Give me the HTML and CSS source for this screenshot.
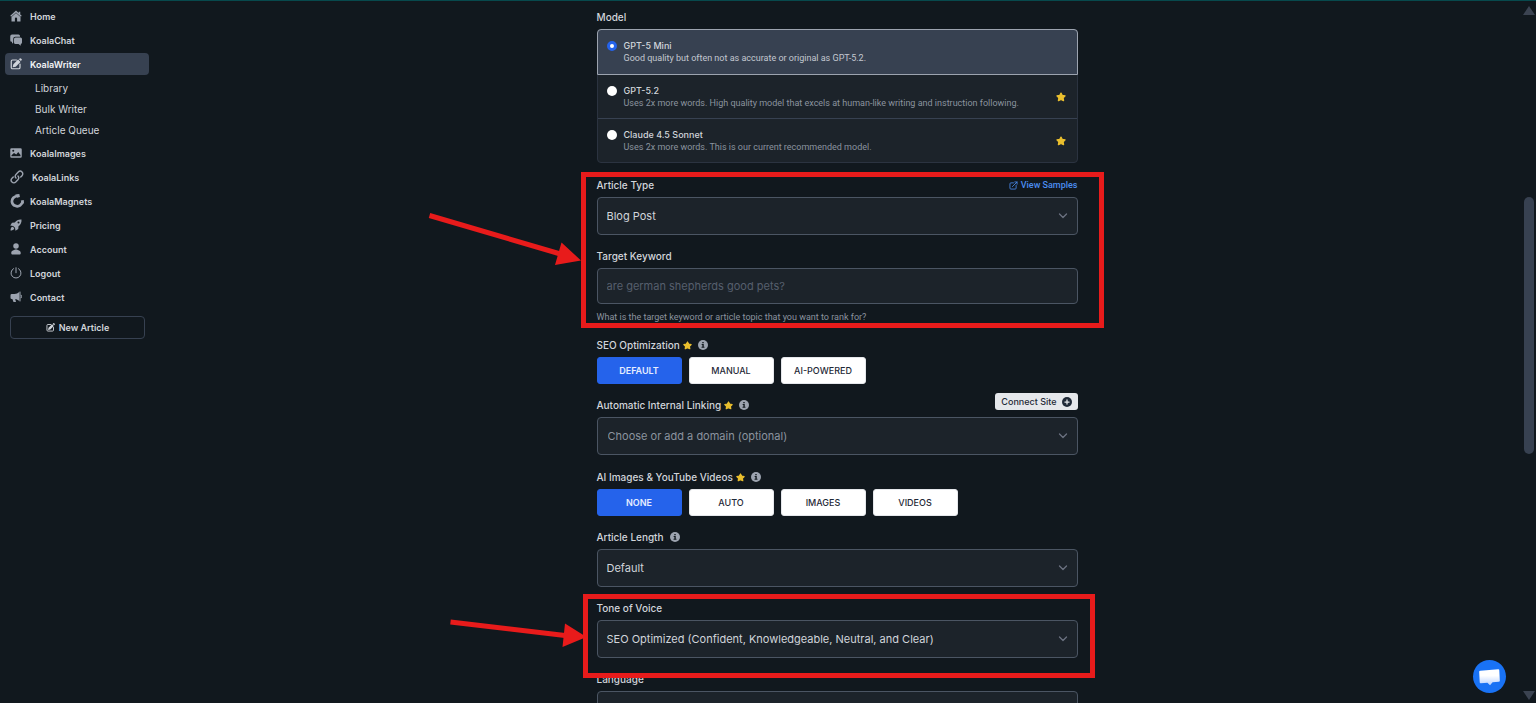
FILE: index.html
```html
<!DOCTYPE html>
<html lang="en">
<head>
<meta charset="utf-8">
<title>KoalaWriter</title>
<link rel="stylesheet" href="styles.css">
</head>
<body>
<svg class="sprite" aria-hidden="true">
  <symbol id="star" viewBox="0 0 24 24"><path fill="currentColor" stroke="currentColor" stroke-width="3" stroke-linejoin="round" d="M12 2.500l3.200 5.800 6.600 1.100-4.600 4.800 1 6.600L12 18l-6.200 2.800 1-6.600L2.200 9.400l6.600-1.100z"/></symbol>
  <symbol id="info" viewBox="0 0 24 24"><circle cx="12" cy="12" r="12" fill="currentColor"/><path fill="#11181e" d="M10.300 4.500h3.400v3.300h-3.400zM8.800 9.800h5v6.500h1.700v2.200H8.500v-2.200h2v-4.300H8.800z"/></symbol>
  <symbol id="chevron" viewBox="0 0 10 6"><path fill="none" stroke="currentColor" stroke-width="1.300" stroke-linecap="round" stroke-linejoin="round" d="M1.500 1L5 4.500 8.500 1"/></symbol>
  <symbol id="edit" viewBox="0 0 24 24"><path fill="none" stroke="currentColor" stroke-width="2.400" stroke-linecap="round" stroke-linejoin="round" d="M13 4H5a2.500 2.500 0 0 0-2.500 2.500V19A2.500 2.500 0 0 0 5 21.500h12.500A2.500 2.500 0 0 0 20 19v-7"/><path fill="currentColor" d="M16.200 3.100l4.700 4.700-9.500 9.500-6 1.300 1.300-6zM17.900 2.400l1.500-1.500a1.700 1.700 0 0 1 2.400 0l1.300 1.300a1.700 1.700 0 0 1 0 2.400l-1.500 1.500z"/></symbol>
</svg>
<div class="app">
  <nav class="sidebar" aria-label="Main">
    <ul class="menu">
      <li><a class="item" href="#"><svg class="icon" viewBox="0 0 24 24"><path fill="currentColor" d="M12 1L.5 11.500l1.800 2L12 4.900l9.700 8.600 1.800-2-3-2.700V3.500h-3v2.600z"/><path fill="currentColor" d="M12 6.200l-9 8V23h6.800v-6a2.200 2.200 0 0 1 4.400 0v6H21v-8.800z"/></svg>Home</a></li>
      <li><a class="item" href="#"><svg class="icon" viewBox="0 0 24 24"><path fill="currentColor" d="M4 1h13a3 3 0 0 1 3 3v1.500h-9.500a4 4 0 0 0-4 4V17L4 19.500v-4a3 3 0 0 1-3.500-3V4.500A3.500 3.500 0 0 1 4 1z"/><path fill="currentColor" d="M11 7h10a3 3 0 0 1 3 3v7a3 3 0 0 1-2.500 3v3.500L17 20h-6a3 3 0 0 1-3-3v-7a3 3 0 0 1 3-3z"/></svg>KoalaChat</a></li>
      <li><a class="item active" href="#" aria-current="page"><svg class="icon"><use href="#edit"/></svg>KoalaWriter</a>
        <ul class="submenu">
          <li><a class="subitem" href="#">Library</a></li>
          <li><a class="subitem" href="#">Bulk Writer</a></li>
          <li><a class="subitem" href="#">Article Queue</a></li>
        </ul>
      </li>
      <li><a class="item" href="#"><svg class="icon" viewBox="0 0 24 24"><path fill="currentColor" fill-rule="evenodd" d="M3 2.500h18A2.500 2.500 0 0 1 23.500 5v14a2.500 2.500 0 0 1-2.500 2.500H3A2.500 2.500 0 0 1 .5 19V5A2.500 2.500 0 0 1 3 2.500zM3 18.500h18V16l-4.500-6-4 5L8 12l-5 4.500zM6.500 5.700a2 2 0 1 0 0 4 2 2 0 0 0 0-4z"/></svg>KoalaImages</a></li>
      <li><a class="item" href="#"><svg class="icon icon-wide" viewBox="0 0 24 24"><g fill="none" stroke="currentColor" stroke-width="2.400" stroke-linecap="round" stroke-linejoin="round"><path d="M13.700 10.300c1.800 2 1.500 4.700-.2 6.400l-3.700 4a4.500 4.500 0 0 1-6.400-6.400l2.200-2.400"/><path d="M10.300 13.700c-1.800-2-1.500-4.700.2-6.400l3.700-4a4.500 4.500 0 0 1 6.400 6.400l-2.200 2.400"/></g></svg>KoalaLinks</a></li>
      <li><a class="item" href="#"><svg class="icon icon-wide icon-flush" viewBox="0 0 24 24"><path fill="none" stroke="currentColor" stroke-width="4.600" d="M14.500 3C7 3.500 2.500 8 3.500 14s9 9 14 5.500l5-6"/><path fill="currentColor" d="M9 1l7-.8 1 5-5 1.300zM18.500 11l5-.8.5 4.500-4 2z"/></svg>KoalaMagnets</a></li>
      <li><a class="item" href="#"><svg class="icon" viewBox="0 0 24 24"><path fill="currentColor" fill-rule="evenodd" d="M23 1c.5 6-1.500 10-6 13.500L16.500 20 11 23.500l-1-5.800L6.300 14 .5 13 4 7.500 9.500 7C13 2.500 17 .5 23 1zM17 5a2 2 0 1 0 0 4 2 2 0 0 0 0-4z"/><path fill="currentColor" d="M4.500 15.500c2 .3 3.700 2 4 4C7.500 22 4 23 1 23c0-3 1-6.500 3.500-7.500z"/></svg>Pricing</a></li>
      <li><a class="item" href="#"><svg class="icon" viewBox="0 0 24 24"><circle cx="12" cy="6" r="5.500" fill="currentColor"/><path fill="currentColor" d="M12 12.500c2.500 1.500 9.500 2 9.500 7.500 0 2-1 3-3 3h-13c-2 0-3-1-3-3 0-5.500 7-6 9.500-7.500z"/></svg>Account</a></li>
      <li><a class="item" href="#"><svg class="icon" viewBox="0 0 24 24"><g fill="none" stroke="currentColor" stroke-width="2" stroke-linecap="round"><path d="M7 3.300a10 10 0 1 0 10 0M12 1.500v10"/></g></svg>Logout</a></li>
      <li><a class="item" href="#"><svg class="icon" viewBox="0 0 24 24"><path fill="currentColor" d="M18.500 2v18c-3-2.500-5-3.500-8-4l1.500 6H7l-2.300-6H3.500A2.500 2.500 0 0 1 1 13.500v-5A2.500 2.500 0 0 1 3.500 6H9c4 0 6.500-1.500 9.500-4z"/><path fill="none" stroke="currentColor" stroke-width="2" stroke-linecap="round" d="M20 2v18M22.500 8.500c.7 1.700.7 3.300 0 5"/></svg>Contact</a></li>
    </ul>
    <button class="new-article" type="button"><svg class="icon-small"><use href="#edit"/></svg>New Article</button>
  </nav>

  <main class="content">
    <form class="form">
      <fieldset class="field models">
        <legend class="label">Model</legend>
        <div class="model-list">
          <label class="model selected">
            <input type="radio" name="model" checked>
            <span class="model-text"><span class="model-name">GPT-5 Mini</span><span class="model-note">Good quality but often not as accurate or original as GPT-5.2.</span></span>
          </label>
          <label class="model">
            <input type="radio" name="model">
            <span class="model-text"><span class="model-name">GPT-5.2</span><span class="model-note">Uses 2x more words. High quality model that excels at human-like writing and instruction following.</span></span>
            <svg class="star"><use href="#star"/></svg>
          </label>
          <label class="model">
            <input type="radio" name="model">
            <span class="model-text"><span class="model-name">Claude 4.5 Sonnet</span><span class="model-note">Uses 2x more words. This is our current recommended model.</span></span>
            <svg class="star"><use href="#star"/></svg>
          </label>
        </div>
      </fieldset>

      <div class="field">
        <div class="label-row">
          <label class="label" for="type">Article Type</label>
          <a class="samples" href="#"><svg class="icon-small" viewBox="0 0 24 24"><path fill="none" stroke="currentColor" stroke-width="2.200" stroke-linecap="round" stroke-linejoin="round" d="M12 5H5a2.500 2.500 0 0 0-2.500 2.500V19A2.500 2.500 0 0 0 5 21.500h11.500A2.500 2.500 0 0 0 19 19v-7M15.500 2.500h6v6M21.500 2.500L9 15"/></svg>View Samples</a>
        </div>
        <div class="select"><select id="type"><option>Blog Post</option></select><svg class="chevron"><use href="#chevron"/></svg></div>
      </div>

      <div class="field">
        <label class="label" for="keyword">Target Keyword</label>
        <input class="text" id="keyword" type="text" placeholder="are german shepherds good pets?" aria-describedby="keyword-help">
        <p class="help" id="keyword-help">What is the target keyword or article topic that you want to rank for?</p>
      </div>

      <div class="field" role="group" aria-labelledby="seo">
        <div class="label" id="seo">SEO Optimization<svg class="star"><use href="#star"/></svg><svg class="info"><use href="#info"/></svg></div>
        <div class="choices"><button class="choice on" type="button">DEFAULT</button><button class="choice" type="button">MANUAL</button><button class="choice" type="button">AI-POWERED</button></div>
      </div>

      <div class="field">
        <div class="label-row">
          <label class="label" for="domain">Automatic Internal Linking<svg class="star"><use href="#star"/></svg><svg class="info"><use href="#info"/></svg></label>
          <button class="connect" type="button">Connect Site<svg class="plus" viewBox="0 0 24 24"><circle cx="12" cy="12" r="12" fill="currentColor"/><path stroke="#e5e7eb" stroke-width="3" stroke-linecap="round" d="M12 7v10M7 12h10"/></svg></button>
        </div>
        <div class="select"><select class="muted" id="domain"><option>Choose or add a domain (optional)</option></select><svg class="chevron"><use href="#chevron"/></svg></div>
      </div>

      <div class="field media" role="group" aria-labelledby="media">
        <div class="label" id="media">AI Images &amp; YouTube Videos<svg class="star"><use href="#star"/></svg><svg class="info"><use href="#info"/></svg></div>
        <div class="choices"><button class="choice on" type="button">NONE</button><button class="choice" type="button">AUTO</button><button class="choice" type="button">IMAGES</button><button class="choice" type="button">VIDEOS</button></div>
      </div>

      <div class="field">
        <label class="label" for="length">Article Length<svg class="info"><use href="#info"/></svg></label>
        <div class="select"><select id="length"><option>Default</option></select><svg class="chevron"><use href="#chevron"/></svg></div>
      </div>

      <div class="field">
        <label class="label" for="tone">Tone of Voice</label>
        <div class="select"><select id="tone"><option>SEO Optimized (Confident, Knowledgeable, Neutral, and Clear)</option></select><svg class="chevron"><use href="#chevron"/></svg></div>
      </div>

      <div class="field">
        <label class="label" for="language">Language</label>
        <div class="select"><select id="language"><option>English</option></select><svg class="chevron"><use href="#chevron"/></svg></div>
      </div>

      <svg class="callouts" viewBox="0 0 700 703" aria-hidden="true">
        <g fill="none" stroke="#e81b1b" stroke-width="5">
          <path d="M186.500 174.500h518v151h-518z"/>
          <path d="M188.500 596.500h507v79h-507z"/>
          <path d="M32.500 215.500L165 254.500M53.500 622L168 635.500"/>
        </g>
        <path fill="#e81b1b" d="M164.500 242.500L184 260.500l-26 4.500zM168 623.500l21.500 13.500-24 10z"/>
      </svg>
    </form>
  </main>

  <div class="scroll-track" aria-hidden="true">
    <span class="arrow-up"></span><span class="thumb"></span><span class="arrow-down"></span>
  </div>

  <button class="chat" type="button" aria-label="Open chat"><svg viewBox="0 0 32 32"><defs><linearGradient id="bubble" x1="0" y1="0" x2="0" y2="1"><stop offset="0" stop-color="#fff"/><stop offset=".4" stop-color="#fff"/><stop offset="1" stop-color="#b9d2ff"/></linearGradient></defs><path fill="url(#bubble)" d="M7 10.500l17.500-1.500q1 0 1 1l.5 10q0 1-1 1l-6 .5-2.500 3-2.500-2.500-6.500.5q-1 0-1-1l-.5-10q0-1 1-1z"/></svg></button>
</div>
</body>
</html>
```

FILE: styles.css
```css
* { box-sizing: border-box; }

body {
  margin: 0;
  background: #11181e;
  color: #d1d5db;
  font-family: Inter, "Liberation Sans", sans-serif;
  font-size: 10px;
}

button, input, select { font-family: inherit; margin: 0; }
ul { list-style: none; margin: 0; padding: 0; }
a { color: inherit; text-decoration: none; }
svg { flex: none; }

.sprite { position: absolute; width: 0; height: 0; }

.app {
  display: flex;
  height: 100vh;
  overflow: hidden;
  border-top: 1px solid #07494d;
}

/* Sidebar */
.sidebar { flex: none; width: 153px; padding: 3px 4px 0 5px; }

.menu > li { padding: 1px 0; }
.menu > li:has(.submenu) { padding-bottom: 0; }

.item {
  display: flex;
  align-items: center;
  gap: 8px;
  height: 22px;
  padding: 0 5px;
  border-radius: 4px;
  font-size: 9px;
  font-weight: 600;
}
.item.active { background: #374151; color: #f3f4f6; }

.icon { width: 12px; height: 12px; color: #9ca3af; }
.item.active .icon { color: #d1d5db; }
.icon-wide { width: 14px; height: 14px; }
.icon-flush { margin-right: -2px; }

.submenu { padding: 2px 0 1px; }
.subitem { display: flex; align-items: center; height: 21px; padding-left: 30px; font-weight: 400; }

.new-article {
  display: flex;
  align-items: center;
  justify-content: center;
  gap: 4px;
  width: 135px;
  height: 23px;
  margin: 7px 0 0 5px;
  border: 1px solid #374151;
  border-radius: 4px;
  background: none;
  color: #d1d5db;
  font-size: 9px;
  font-weight: 600;
}
.icon-small { width: 9px; height: 9px; }

/* Form */
.content { flex: 1; padding-top: 8px; }

.form {
  position: relative;
  display: flex;
  flex-direction: column;
  gap: 13px;
  width: 481px;
  max-width: 100%;
  margin: 0 auto;
}

.field { min-width: 0; margin: 0; padding: 0; border: 0; }
.models { margin-bottom: 1px; }
.media { margin-top: 1px; }

.label {
  display: flex;
  align-items: center;
  height: 16px;
  margin-bottom: 4px;
  padding: 0;
  font-weight: 500;
}
.label-row { display: flex; justify-content: space-between; height: 20px; }

.star { width: 10px; height: 10px; color: #eabf2e; }
.label .star { width: 9px; height: 9px; margin-left: 3px; }
.info { width: 10px; height: 10px; margin-left: 6px; color: #9ca3af; }

.model-list { border: 1px solid #2b3340; border-radius: 4px; background: #1c232a; }
.model {
  display: flex;
  align-items: center;
  gap: 7px;
  height: 44px;
  padding: 0 11px 0 9px;
  border-top: 1px solid #374151;
}
.model.selected {
  position: relative;
  height: 46px;
  margin: -1px;
  padding-bottom: 1px;
  border: 1px solid #9ca3af;
  border-radius: 4px 4px 0 0;
  background: #374151;
}
.model input {
  appearance: none;
  flex: none;
  align-self: flex-start;
  width: 10px;
  height: 10px;
  margin-top: 11px;
  border-radius: 50%;
  background: #fff;
}
.model input:checked { border: 3px solid #2563eb; }
.model-text { flex: 1; display: flex; flex-direction: column; font-size: 9px; line-height: 12px; }
.model-name { font-weight: 500; }
.model-note { color: #8b939f; }
.selected .model-note { color: #c3c8d0; }
.model-note, .help, .samples { font-family: Roboto, Inter, sans-serif; }

.samples { display: flex; align-items: center; gap: 3px; height: 16px; color: #4b8df0; font-size: 9px; font-weight: 500; }

.select { display: grid; align-items: center; }
.select select, .chevron { grid-area: 1 / 1; }
.chevron { justify-self: end; width: 10px; height: 6px; margin-right: 10px; color: #6b7280; pointer-events: none; }

select, .text {
  appearance: none;
  display: block;
  width: 100%;
  height: 38px;
  padding: 0 9px;
  border: 1px solid #4b5563;
  border-radius: 4px;
  background: #1c232a;
  color: #d1d5db;
  font-size: 11px;
}
.text { height: 36px; }
.text::placeholder { color: #565f6d; }
select.muted { padding: 0 10px; color: #8b939f; }

.help { margin: 7px 0 0; color: #8b939f; font-size: 9px; line-height: 13px; }

.choices { display: flex; gap: 7px; }
.choice {
  width: 85px;
  height: 27px;
  padding: 0;
  border: 1px solid #e5e7eb;
  border-radius: 3px;
  background: #fff;
  color: #1f2937;
  font-size: 9px;
  font-weight: 500;
}
.choice.on { border-color: #2563eb; background: #2563eb; color: #e5edff; font-weight: 600; }

.connect {
  display: flex;
  align-items: center;
  gap: 5px;
  height: 17px;
  padding: 0 6px;
  border: 0;
  border-radius: 3px;
  margin-top: -4px;
  background: #e5e7eb;
  color: #1f2937;
  font-size: 9px;
  font-weight: 500;
}
.plus { width: 10px; height: 10px; }

/* Markup drawn over the form */
.callouts {
  position: absolute;
  top: -9px;
  left: -200px;
  width: 700px;
  height: 703px;
  overflow: visible;
  pointer-events: none;
}

/* Scroll bar */
.scroll-track {
  flex: none;
  display: flex;
  flex-direction: column;
  align-items: center;
  width: 15px;
  padding: 5px 0 3px;
}
.arrow-up, .arrow-down { border: 6px solid transparent; border-top-width: 0; border-bottom: 9px solid #3b4351; }
.arrow-down { margin-top: auto; border-top: 9px solid #3b4351; border-bottom-width: 0; }
.thumb { width: 10px; height: 37%; margin-top: 182px; border-radius: 5px; background: #374151; }

.chat {
  position: absolute;
  right: 30px;
  bottom: 10px;
  width: 33px;
  height: 33px;
  padding: 0;
  border: 0;
  border-radius: 50%;
  background: #1972f5;
}
.chat svg { display: block; width: 100%; height: 100%; }
```
